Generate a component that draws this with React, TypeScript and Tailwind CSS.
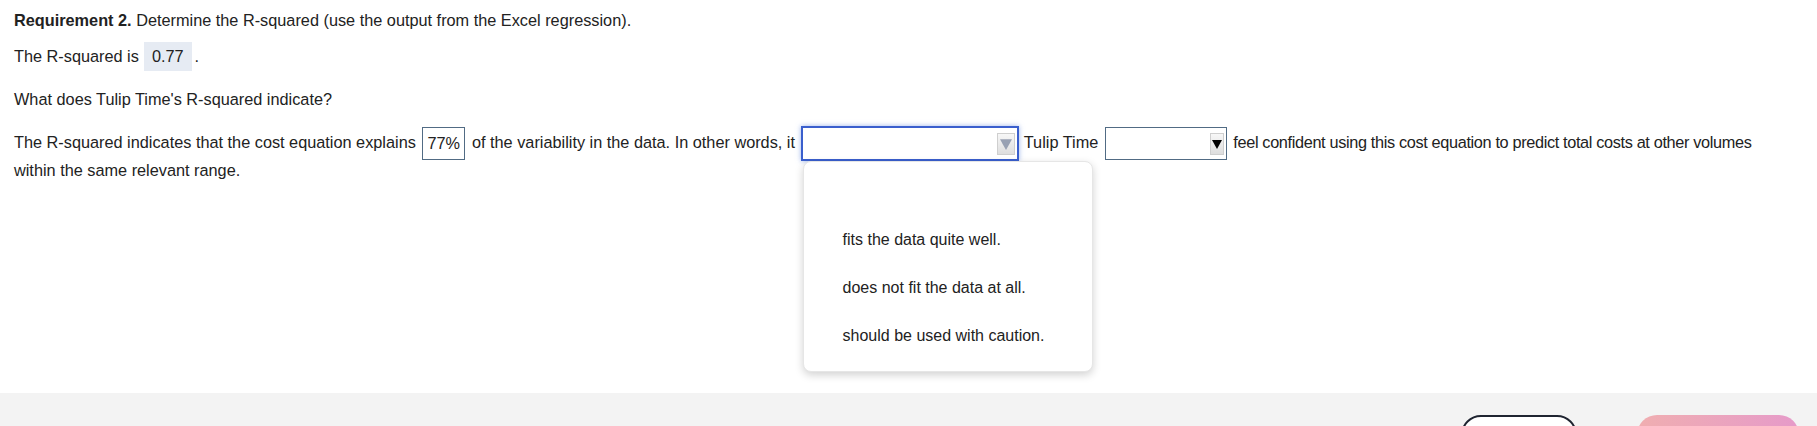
import React from "react";

const options = ["", "fits the data quite well.", "does not fit the data at all.", "should be used with caution."];

export default function App() {
  return (
    <div className="w-[1817px] h-[426px] flex flex-col bg-white text-[16.3px] text-[#222] font-['Liberation_Sans',Arial,sans-serif] overflow-hidden">
      <div className="flex-1 pl-[14px] pr-[30px] pt-[10px]">
        <p className="leading-[20px]">
          <span className="font-bold">Requirement 2.</span> Determine the R-squared (use the output from the Excel
          regression).
        </p>

        <p className="mt-[12px] flex items-center h-[28px]">
          The R-squared is
          <span className="ml-[5px] mr-[3px] inline-flex items-center h-[29px] px-[8px] bg-[#e6ebf3]">0.77</span>.
        </p>

        <p className="mt-[19px] leading-[20px]">What does Tulip Time&apos;s R-squared indicate?</p>

        <p className="mt-[20px] leading-[27px]">
          The R-squared indicates that the cost equation explains{" "}
          <span className="inline-flex items-center align-middle -my-[3px] mx-[2px] h-[33px] w-[43px] px-[4px] border border-[#516b84]">
            77%
          </span>{" "}
          of the variability in the data. In other words, it{" "}
          <span className="relative inline-block align-middle -my-[3px] mx-[2px] h-[33px] w-[216px] border border-[#3a5fcd] shadow-[0_0_0_1px_#3a5fcd,0_0_5px_1px_rgba(90,130,220,0.6)] bg-white">
            <span className="absolute right-[2px] top-1/2 -translate-y-1/2 w-[18px] h-[22px] flex items-center justify-center bg-gradient-to-b from-[#f7f7f7] to-[#dedede] border border-[#cfcfcf]">
              <svg viewBox="0 0 10 10" className="w-[12px] h-[12px]">
                <polygon points="0,1 10,1 5,10" fill="#98a1b3" />
              </svg>
            </span>
            <div className="absolute left-0 top-[33px] w-[290px] pt-[6px] pb-[11px] bg-white rounded-[8px] border border-[#e6e6e6] shadow-[0_3px_8px_rgba(0,0,0,0.18)] z-10">
              {options.map((o, i) => (
                <div key={i} className="h-[48px] flex items-center pl-[39px] text-[16px] leading-none whitespace-nowrap">
                  {o}
                </div>
              ))}
            </div>
          </span>{" "}
          Tulip Time{" "}
          <span className="relative inline-block align-middle -my-[3px] mx-[2px] h-[33px] w-[122px] border border-[#516b84] bg-white">
            <span className="absolute right-[2px] top-1/2 -translate-y-1/2 w-[14px] h-[22px] flex items-center justify-center bg-gradient-to-b from-[#f7f7f7] to-[#dedede] border border-[#cfcfcf]">
              <svg viewBox="0 0 10 10" className="w-[10px] h-[12px]">
                <polygon points="0,1 10,1 5,10" fill="#000" />
              </svg>
            </span>
          </span>{" "}
          <span className="tracking-[-0.35px]">
            feel confident using this cost equation to predict total costs at other volumes
          </span>{" "}
          within the same relevant range.
        </p>
      </div>

      <div className="h-[33px] shrink-0 bg-[#f3f3f3] flex justify-end items-start pt-[22px] pr-[18px] gap-[60px]">
        <button className="w-[116px] h-[40px] shrink-0 rounded-[20px] border-2 border-[#1f2430] bg-white" />
        <button className="w-[162px] h-[40px] shrink-0 rounded-[20px] bg-gradient-to-r from-[#f0aeb0] to-[#e69ac9]" />
      </div>
    </div>
  );
}
